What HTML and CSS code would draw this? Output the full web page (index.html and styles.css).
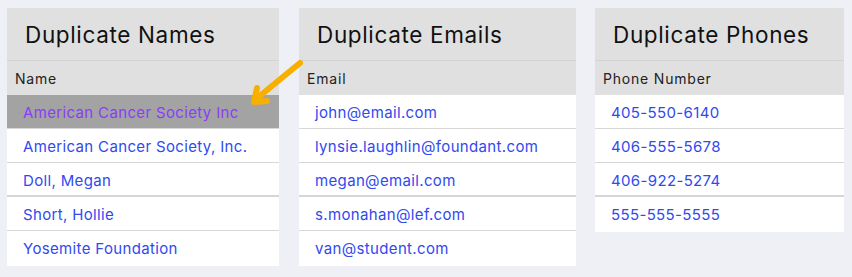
FILE: index.html
```html
<!DOCTYPE html>
<html>
<head>
<meta charset="utf-8">
<link rel="stylesheet" href="styles.css">
</head>
<body>
<div class="board">
  <section class="card card-names">
    <h2 class="card-title">Duplicate Names</h2>
    <div class="col-head">Name</div>
    <a class="row row-active">American Cancer Society Inc</a>
    <a class="row">American Cancer Society, Inc.</a>
    <a class="row row-thick">Doll, Megan</a>
    <a class="row">Short, Hollie</a>
    <a class="row row-last">Yosemite Foundation</a>
  </section>
  <section class="card card-emails">
    <h2 class="card-title">Duplicate Emails</h2>
    <div class="col-head">Email</div>
    <a class="row">john@email.com</a>
    <a class="row">lynsie.laughlin@foundant.com</a>
    <a class="row row-thick">megan@email.com</a>
    <a class="row">s.monahan@lef.com</a>
    <a class="row row-last">van@student.com</a>
  </section>
  <section class="card card-phones">
    <h2 class="card-title">Duplicate Phones</h2>
    <div class="col-head">Phone Number</div>
    <a class="row">405-550-6140</a>
    <a class="row">406-555-5678</a>
    <a class="row row-thick">406-922-5274</a>
    <a class="row row-last">555-555-5555</a>
  </section>
  <svg class="pointer" width="70" height="60" viewBox="0 0 70 60">
    <g fill="none" stroke="#f7b000" stroke-width="6" stroke-linecap="round" stroke-linejoin="round">
      <path d="M56 4 L12 40"/>
      <path d="M13 29 L10 43 L23 42"/>
    </g>
  </svg>
</div>
</body>
</html>
```

FILE: styles.css
```css
html, body {
  margin: 0;
  padding: 0;
  background: #eef0f5;
}
body {
  font-family: Inter, "Open Sans", sans-serif;
}
.board {
  position: relative;
  display: flex;
  align-items: flex-start;
  gap: 20px;
  padding: 8px 0 0 7px;
}
.card {
  background: #ffffff;
  display: flex;
  flex-direction: column;
}
.card-names { width: 272px; }
.card-emails { width: 277px; }
.card-phones { width: 249px; margin-left: -1px; }
.card-title {
  margin: 0;
  height: 53px;
  box-sizing: border-box;
  padding: 14px 0 0 18px;
  font-size: 22.5px;
  line-height: 26px;
  font-weight: 400;
  color: #111;
  background: #e0e0e0;
  border-bottom: 1px solid #d3d3d3;
  letter-spacing: 0.65px;
}
.col-head {
  height: 34px;
  box-sizing: border-box;
  padding: 10px 0 0 8px;
  font-size: 14px;
  line-height: 16px;
  letter-spacing: 0.8px;
  color: #222;
  background: #e0e0e0;
}
.row {
  display: block;
  height: 34px;
  box-sizing: border-box;
  padding: 9px 0 0 16px;
  font-size: 15px;
  line-height: 18px;
  letter-spacing: 0.35px;
  color: #3049f0;
  border-bottom: 1px solid #d8d8d8;
}
.row-thick { border-bottom: 2px solid #d6d6d6; }
.row-last { border-bottom: none; height: 35px; }
.row-active {
  background: #a3a3a3;
  color: #8a3cfb;
}
.pointer {
  position: absolute;
  left: 244px;
  top: 59px;
}
```
